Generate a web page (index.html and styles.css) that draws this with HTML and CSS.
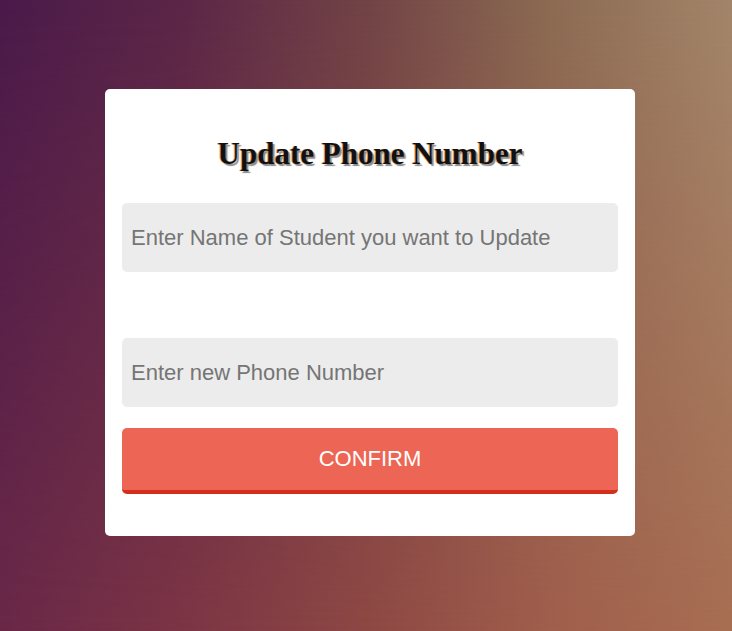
FILE: index.html
```html
<!DOCTYPE html>
<html lang="en">
<head>
<meta charset="utf-8">
<title>Update Phone Number</title>
<link rel="stylesheet" href="styles.css">
</head>
<body>
<div class="page">
  <form class="card">
    <h1 class="title">Update Phone Number</h1>
    <input class="field" type="text" placeholder="Enter Name of Student you want to Update">
    <div class="spacer"></div>
    <input class="field" type="text" placeholder="Enter new Phone Number">
    <button class="confirm" type="button">CONFIRM</button>
  </form>
</div>
</body>
</html>
```

FILE: styles.css
```css
html, body {
  margin: 0;
  padding: 0;
  height: 100%;
}
body {
  position: relative;
  overflow: hidden;
  background: linear-gradient(to right, #6a2848 0%, #7c3545 25%, #8e4844 50%, #a05e4c 75%, #a86e52 100%);
  font-family: "Liberation Sans", Arial, sans-serif;
}
body::before {
  content: "";
  position: absolute;
  inset: 0;
  background: linear-gradient(to right, #4a1a4a 0%, #5b2647 25%, #714346 50%, #8b6a52 75%, #a2856a 100%);
  -webkit-mask-image: linear-gradient(to bottom, #000 0%, transparent 100%);
  mask-image: linear-gradient(to bottom, #000 0%, transparent 100%);
}
.page {
  position: relative;
  display: flex;
  justify-content: center;
  padding: 89px 0 0 8px;
}
.card {
  width: 530px;
  box-sizing: border-box;
  background: #fff;
  border-radius: 5px;
  padding: 17px 17px 42px;
  display: flex;
  flex-direction: column;
}
.title {
  margin: 29px 0 28px;
  height: 40px;
  line-height: 38px;
  text-align: center;
  font-family: "Liberation Serif", "Times New Roman", serif;
  font-weight: bold;
  font-size: 31px;
  color: #111;
  text-shadow: -1px 0 0 #e0a878, 2px 2px 1px #8a8a8a;
}
.field {
  display: block;
  width: 100%;
  height: 69px;
  box-sizing: border-box;
  border: none;
  border-radius: 5px;
  background: #ececec;
  padding: 0 9px;
  font-family: "Liberation Sans", Arial, sans-serif;
  font-size: 22px;
  color: #333;
  outline: none;
}
.field::placeholder {
  color: #757575;
}
.spacer {
  height: 66px;
}
.confirm {
  margin-top: 21px;
  height: 66px;
  border: none;
  border-bottom: 4px solid #d32f1c;
  border-radius: 5px;
  background: #ed6655;
  color: #fff;
  font-family: "Liberation Sans", Arial, sans-serif;
  font-size: 22px;
  cursor: pointer;
}
```
